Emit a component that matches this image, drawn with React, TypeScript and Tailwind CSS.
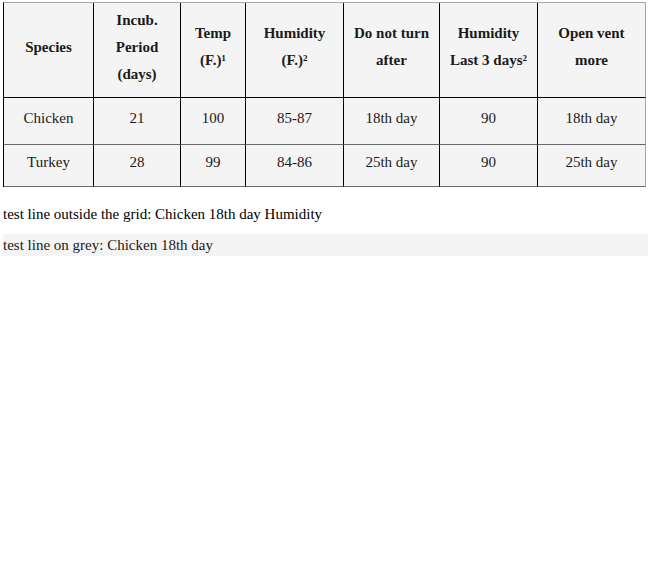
const header = [
  ['Species'],
  ['Incub.', 'Period', '(days)'],
  ['Temp', '(F.)¹'],
  ['Humidity', '(F.)²'],
  ['Do not turn', 'after'],
  ['Humidity', 'Last 3 days²'],
  ['Open vent', 'more'],
];

const rows: Array<{ cells: string[][]; soft?: boolean }> = [
  { cells: [['Chicken'], ['21'], ['100'], ['85-87'], ['18th day'], ['90'], ['18th day']], soft: true },
  { cells: [['Turkey'], ['28'], ['99'], ['84-86'], ['25th day'], ['90'], ['25th day']], soft: true },
];

const Cell = ({ lines, bold, soft, last }: { lines: string[]; bold?: boolean; soft?: boolean; last?: boolean }) => (
  <div
    className={
      'flex flex-col items-center justify-center border-r border-b pb-[6px] text-center ' +
      (last ? 'border-r-[#a8a8a8] ' : 'border-r-black ') +
      (soft ? 'border-b-[#6a6a6a] ' : 'border-b-black ') +
      (bold ? 'font-bold' : 'font-normal')
    }
  >
    {lines.map((line, i) => (
      <span key={i}>{line}</span>
    ))}
  </div>
);

export default function App() {
  return (
    <div className="min-h-[571px] w-[648px] bg-white pl-[3px] pt-[2px] font-['Liberation_Serif',serif]">
      <div className="grid w-fit grid-cols-[90px_87px_65px_98px_96px_98px_108px] grid-rows-[95px_47px_42px] border-t border-l border-t-[#a8a8a8] border-l-black bg-[#f4f4f4] text-[15px] leading-[27px] text-[#1a1a1a]">
        {header.map((lines, i) => (
          <Cell key={i} lines={lines} bold last={i === header.length - 1} />
        ))}
        {rows.map((row, r) =>
          row.cells.map((lines, i) => (
            <Cell key={r + '-' + i} lines={lines} soft={row.soft} last={i === row.cells.length - 1} />
          )),
        )}
      </div>
      <div className="mt-4 text-[15px]">test line outside the grid: Chicken 18th day Humidity</div>
      <div className="mt-2 bg-[#f4f4f4] text-[15px] text-[#1a1a1a]">test line on grey: Chicken 18th day</div>
    </div>
  );
}
